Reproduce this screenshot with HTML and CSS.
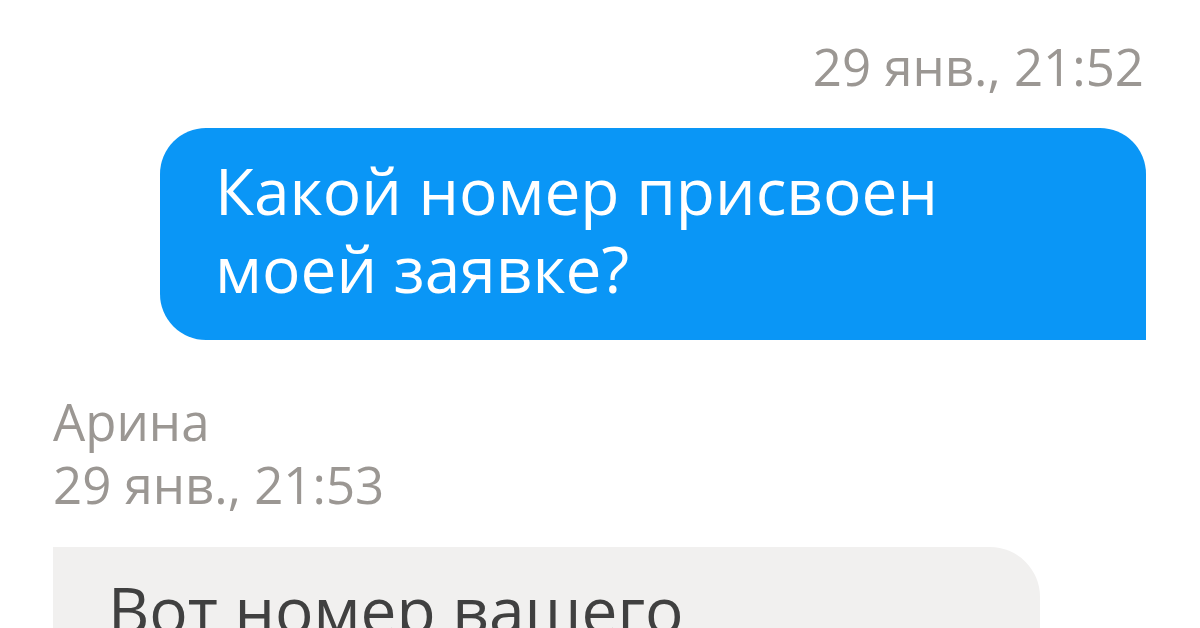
FILE: index.html
```html
<!DOCTYPE html>
<html lang="ru">
<head>
    <meta charset="UTF-8">
    <meta name="viewport" content="width=device-width, initial-scale=1.0">
    <title>Чат поддержки</title>
    <link rel="stylesheet" href="styles.css">
</head>
<body>
    <div class="chat">
        <div class="stamp stamp-out">29 янв., 21:52</div>
        <div class="bubble bubble-out">Какой номер присвоен моей заявке?</div>

        <div class="author">Арина</div>
        <div class="stamp">29 янв., 21:53</div>
        <div class="bubble bubble-in">Вот номер вашего обращения</div>
    </div>
</body>
</html>
```

FILE: styles.css
```css
body {
    margin: 0;
    background: #fff;
    font-family: "Open Sans", "Noto Sans", sans-serif;
    overflow: hidden;
}
.chat {
    padding: 35px 54px 0 53px;
}
.stamp, .author {
    color: #9b9793;
    font-size: 51px;
    line-height: 63px;
}
.stamp-out {
    text-align: right;
    margin-right: 2px;
}
.bubble {
    font-size: 64px;
    line-height: 78px;
    padding: 24px 120px 32px 55px;
}
.bubble-out {
    margin: 30px 0 0 107px;
    background: #0a96f6;
    color: #fff;
    border-radius: 46px 46px 0 46px;
}
.bubble-in {
    margin: 31px 106px 0 0;
    background: #f1f0ef;
    color: #404040;
    border-radius: 0 50px 50px 50px;
}
.author {
    margin-top: 50px;
}
```
